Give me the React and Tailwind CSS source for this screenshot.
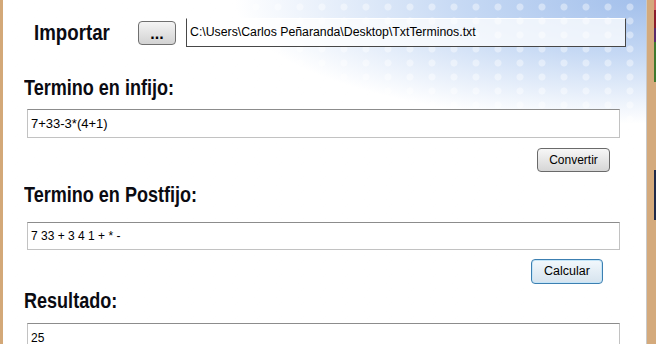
import React from 'react'

const heading = "block origin-left scale-x-[0.82] font-['Liberation_Sans',Arial,sans-serif] font-bold text-[22px] leading-[26px] text-[#0b0b12] whitespace-nowrap"
const field = "ml-[3px] w-[593px] flex items-center bg-white border border-[#c2c2c2] border-t-[#8c8c8c] pl-[3px] font-['Liberation_Sans',Arial,sans-serif] text-black"
const btn = "flex items-center justify-center rounded-[4px] border font-['Liberation_Sans',Arial,sans-serif] text-black"

const App = () => {
  return (
    <div className="w-[656px] h-[344px] flex overflow-hidden bg-white">
      <div className="w-[3px] bg-[#d3a878]" />

      <div className="flex-1 overflow-hidden pl-[21px] pt-[18px] bg-[radial-gradient(circle,rgba(255,255,255,0.4)_0_3px,transparent_4px),radial-gradient(ellipse_64%_36%_at_100%_0%,#a2bfeb_0%,#c6d9f4_45%,#ffffff_100%)] bg-[size:22px_14px,100%_100%]">
        <div className="h-[29px] flex items-center">
          <div className="w-[114px] shrink-0 pl-[10px]">
            <span className={`${heading} scale-x-[0.85]`}>Importar</span>
          </div>
          <button className={`${btn} shrink-0 w-[38px] h-[24px] border-[#6f6f6f] bg-linear-to-b from-[#f4f4f4] to-[#d2d2d2] text-[16px] leading-none font-bold text-[#10183a] pt-[2px]`}>
            ...
          </button>
          <div className="ml-[10px] w-[440px] shrink-0 h-[29px] flex items-center bg-white/75 border border-[#474747] border-t-white pl-[3px] font-['Liberation_Sans',Arial,sans-serif] text-[12.3px] text-black">
            C:\Users\Carlos Peñaranda\Desktop\TxtTerminos.txt
          </div>
        </div>

        <h2 className={`mt-[28px] ${heading}`}>Termino en infijo:</h2>
        <div className={`mt-[8px] h-[29px] text-[13px] ${field}`}>7+33-3*(4+1)</div>
        <button className={`${btn} mt-[10px] ml-[513px] w-[73px] h-[24px] border-[#6a6a6a] bg-linear-to-b from-[#f7f7f7] to-[#d6d6d6] text-[12px]`}>
          Convertir
        </button>

        <h2 className={`mt-[10px] ${heading}`}>Termino en Postfijo:</h2>
        <div className={`mt-[14px] h-[28px] text-[12px] ${field}`}>7 33 + 3 4 1 + * -</div>
        <button className={`${btn} mt-[9px] ml-[507px] w-[72px] h-[25px] border-[#3c7fb1] shadow-[inset_0_0_0_1px_#c4e5f8] bg-linear-to-b from-[#f2f8fc] to-[#d6e3ee] text-[12.5px]`}>
          Calcular
        </button>

        <h2 className={`mt-[4px] ${heading}`}>Resultado:</h2>
        <div className={`mt-[9px] h-[29px] text-[12px] ${field}`}>25</div>
      </div>

      <div className="w-[1px] bg-[#c9c9c9]" />
      <div className="w-[7px] bg-[#d4aa7c]" />
      <div className="w-[2px] flex flex-col">
        <div className="h-[10px] bg-[#d86a6a]" />
        <div className="h-[18px] bg-[#8c1c2c]" />
        <div className="h-[14px] bg-[#5a2a6a]" />
        <div className="h-[40px] bg-[#3f7a2e]" />
        <div className="h-[88px] bg-[#d4aa7c]" />
        <div className="h-[50px] bg-[#1f2a4a]" />
        <div className="flex-1 bg-[#d4aa7c]" />
      </div>
    </div>
  )
}

export default App
